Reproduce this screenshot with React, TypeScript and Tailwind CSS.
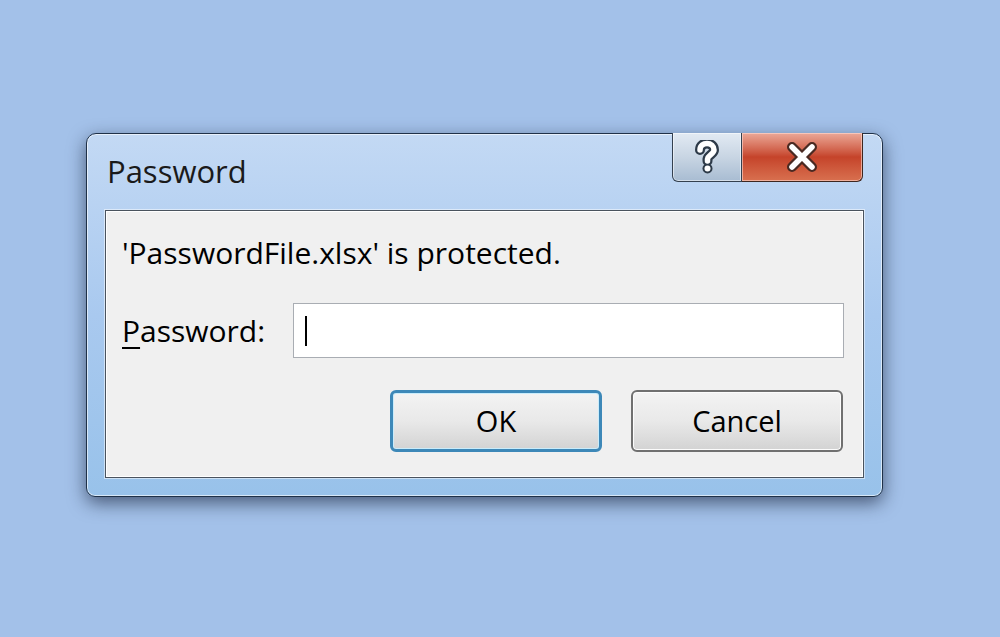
import React from 'react';

const font = { fontFamily: '"Open Sans", "Noto Sans", "Liberation Sans", sans-serif' };

// Help "?" glyph drawn as outlined strokes
const HelpIcon = () => (
  <svg width="28" height="34" viewBox="0 0 28 34">
    <path d="M7 10 C7 5 10.5 3.5 14 3.5 C18 3.5 21 6 21 10 C21 14 15 15 14.5 19 L14.5 21" fill="none" stroke="#2d3a48" strokeWidth="10" strokeLinecap="round" />
    <circle cx="14.5" cy="28.5" r="5" fill="#2d3a48" />
    <path d="M7 10 C7 5 10.5 3.5 14 3.5 C18 3.5 21 6 21 10 C21 14 15 15 14.5 19 L14.5 21" fill="none" stroke="#ffffff" strokeWidth="5.5" strokeLinecap="round" />
    <circle cx="14.5" cy="28.5" r="3" fill="#ffffff" />
  </svg>
);

const CloseIcon = () => (
  <svg width="34" height="30" viewBox="0 0 34 30">
    <path d="M7 5 L27 25 M27 5 L7 25" fill="none" stroke="#4a2a22" strokeWidth="10" strokeLinecap="round" />
    <path d="M7 5 L27 25 M27 5 L7 25" fill="none" stroke="#ffffff" strokeWidth="5.5" strokeLinecap="round" />
  </svg>
);

const App: React.FC = () => {
  return (
    <div className="w-[1000px] h-[637px] bg-[#a3c1e9] pt-[133px] pl-[86px] overflow-hidden" style={font}>
      {/* Window */}
      <div className="w-[797px] h-[364px] flex flex-col rounded-t-[10px] rounded-b-[9px] border border-[#1f3148] bg-gradient-to-b from-[#c3d9f4] via-[#a9c9ef] to-[#98c2ea] shadow-[0_6px_18px_rgba(25,35,60,0.65),inset_0_0_0_1px_rgba(255,255,255,0.6)]">
        {/* Title bar */}
        <div className="h-[76px] flex justify-between">
          <div className="pl-[20px] pt-[17px] text-[31px] leading-[40px] text-[#1a1a1a]">Password</div>
          <div className="flex h-[49px] mr-[19px] -mt-px">
            <div className="w-[70px] flex items-center justify-center rounded-bl-[6px] border border-t-0 border-[#34404f] bg-gradient-to-b from-[#e2eaf3] via-[#c8d5e3] to-[#a8bcd2] shadow-[inset_0_0_0_1px_rgba(255,255,255,0.5)]">
              <HelpIcon />
            </div>
            <div className="w-[121px] flex items-center justify-center rounded-br-[6px] border border-l-0 border-t-0 border-[#3e2620] bg-gradient-to-b from-[#eaa898] via-[#c5432a] to-[#d8704f] shadow-[inset_0_0_0_1px_rgba(255,220,210,0.6)]">
              <CloseIcon />
            </div>
          </div>
        </div>

        {/* Client area */}
        <div className="flex-1 mx-[18px] mb-[18px] border border-[#4a535e] bg-[#f0f0f0] shadow-[inset_0_0_0_1px_#ffffff,0_0_0_1px_rgba(255,255,255,0.5)] flex flex-col">
          <div className="pl-4 pt-[22px] h-[92px] text-[30px] leading-[40px] text-black">'PasswordFile.xlsx' is protected.</div>
          <div className="flex items-center pl-4 h-[55px]">
            <div className="w-[171px] text-[30px] text-black">
              <span className="underline underline-offset-[5px] decoration-[2px]">P</span>assword:
            </div>
            <div className="w-[551px] h-[55px] border border-[#a9adb3] bg-white flex items-center pl-[11px]">
              <div className="w-[2px] h-[30px] bg-black" />
            </div>
          </div>
          <div className="flex justify-end gap-[29px] pr-[20px] pt-[32px] text-[29px]">
            <button className="w-[212px] h-[62px] rounded-[6px] border-[3px] border-[#3d88b8] bg-gradient-to-b from-[#f3f3f3] via-[#e9e9e9] to-[#d3d3d3] shadow-[inset_0_0_0_1px_#c9ecfb] text-black">
              OK
            </button>
            <button className="w-[212px] h-[62px] rounded-[6px] border-2 border-[#707070] bg-gradient-to-b from-[#f3f3f3] via-[#e9e9e9] to-[#d3d3d3] shadow-[inset_0_0_0_1px_#fcfcfc] text-black">
              Cancel
            </button>
          </div>
        </div>
      </div>
    </div>
  );
};

export default App;
